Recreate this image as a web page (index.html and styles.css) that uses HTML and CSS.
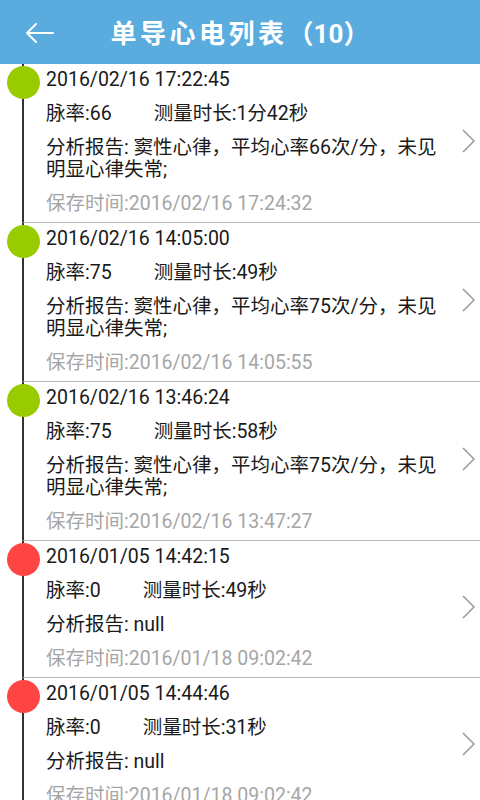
FILE: index.html
```html
<!DOCTYPE html>
<html lang="zh-CN">
<head>
  <meta charset="UTF-8" />
  <meta name="viewport" content="width=device-width, initial-scale=1.0"/>
  <title>单导心电列表</title>
  <link rel="stylesheet" href="styles.css">
</head>
<body>
  <header class="topbar">
    <svg class="back" width="28" height="20" viewBox="0 0 28 20">
      <path d="M1 10 H27 M10 1 L1 10 L10 19" fill="none" stroke="#fff" stroke-width="2" stroke-linecap="round" stroke-linejoin="round"/>
    </svg>
    <h1><span class="name">单导心电列表</span>（10）</h1>
    <span></span>
  </header>

  <ul class="timeline">
    <li class="record ok">
      <span class="dot"></span>
      <div class="info">
        <p>2016/02/16 17:22:45</p>
        <p><span class="rate">脉率:66</span>测量时长:1分42秒</p>
        <p class="report">分析报告: 窦性心律，平均心率66次/分，未见明显心律失常;</p>
        <p class="saved">保存时间:2016/02/16 17:24:32</p>
      </div>
      <svg class="more" width="14" height="24" viewBox="0 0 14 24"><path d="M1 1 L12 12 L1 23" fill="none" stroke="#9a9a9a" stroke-width="1.5"/></svg>
    </li>
    <li class="record ok">
      <span class="dot"></span>
      <div class="info">
        <p>2016/02/16 14:05:00</p>
        <p><span class="rate">脉率:75</span>测量时长:49秒</p>
        <p class="report">分析报告: 窦性心律，平均心率75次/分，未见明显心律失常;</p>
        <p class="saved">保存时间:2016/02/16 14:05:55</p>
      </div>
      <svg class="more" width="14" height="24" viewBox="0 0 14 24"><path d="M1 1 L12 12 L1 23" fill="none" stroke="#9a9a9a" stroke-width="1.5"/></svg>
    </li>
    <li class="record ok">
      <span class="dot"></span>
      <div class="info">
        <p>2016/02/16 13:46:24</p>
        <p><span class="rate">脉率:75</span>测量时长:58秒</p>
        <p class="report">分析报告: 窦性心律，平均心率75次/分，未见明显心律失常;</p>
        <p class="saved">保存时间:2016/02/16 13:47:27</p>
      </div>
      <svg class="more" width="14" height="24" viewBox="0 0 14 24"><path d="M1 1 L12 12 L1 23" fill="none" stroke="#9a9a9a" stroke-width="1.5"/></svg>
    </li>
    <li class="record bad">
      <span class="dot"></span>
      <div class="info">
        <p>2016/01/05 14:42:15</p>
        <p><span class="rate">脉率:0</span>测量时长:49秒</p>
        <p class="report">分析报告: null</p>
        <p class="saved">保存时间:2016/01/18 09:02:42</p>
      </div>
      <svg class="more" width="14" height="24" viewBox="0 0 14 24"><path d="M1 1 L12 12 L1 23" fill="none" stroke="#9a9a9a" stroke-width="1.5"/></svg>
    </li>
    <li class="record bad">
      <span class="dot"></span>
      <div class="info">
        <p>2016/01/05 14:44:46</p>
        <p><span class="rate">脉率:0</span>测量时长:31秒</p>
        <p class="report">分析报告: null</p>
        <p class="saved">保存时间:2016/01/18 09:02:42</p>
      </div>
      <svg class="more" width="14" height="24" viewBox="0 0 14 24"><path d="M1 1 L12 12 L1 23" fill="none" stroke="#9a9a9a" stroke-width="1.5"/></svg>
    </li>
  </ul>
</body>
</html>
```

FILE: styles.css
```css
body {
  margin: 0;
  font-family: Roboto, "Noto Sans CJK SC", sans-serif;
  background: #fff;
  color: #1a1a1a;
  overflow: hidden;
}
.topbar {
  height: 64px;
  background: #5aacde;
  display: grid;
  grid-template-columns: 64px 1fr 64px;
  align-items: center;
}
.back {
  margin-left: 26px;
  margin-top: 2px;
}
.topbar h1 {
  margin: 0 0 2px;
  text-align: center;
  color: #fff;
  font-size: 26px;
  font-weight: bold;
  white-space: nowrap;
}
.topbar .name {
  letter-spacing: 3.5px;
}
.timeline {
  list-style: none;
  margin: 0;
  padding: 0;
}
.record {
  margin-left: 22px;
  border-left: 2px solid #333;
  border-bottom: 1px solid #b8b8b8;
  padding: 2px 0 7px;
  display: flex;
  align-items: center;
}
.dot {
  flex: none;
  align-self: flex-start;
  width: 33px;
  height: 33px;
  border-radius: 50%;
  margin-left: -17.5px;
  margin-right: 6.5px;
}
.ok .dot {
  background: #99cc00;
}
.bad .dot {
  background: #ff4444;
}
.info {
  flex: 1;
  padding-top: 3px;
  padding-right: 14px;
  font-size: 19.5px;
  line-height: 22px;
}
.info p {
  margin: 0 0 12px;
}
.info p:last-child {
  margin-bottom: 0;
}
.rate {
  margin-right: 42px;
}
.saved {
  color: #a6a6a6;
}
.more {
  flex: none;
  margin-right: 4px;
}
```
